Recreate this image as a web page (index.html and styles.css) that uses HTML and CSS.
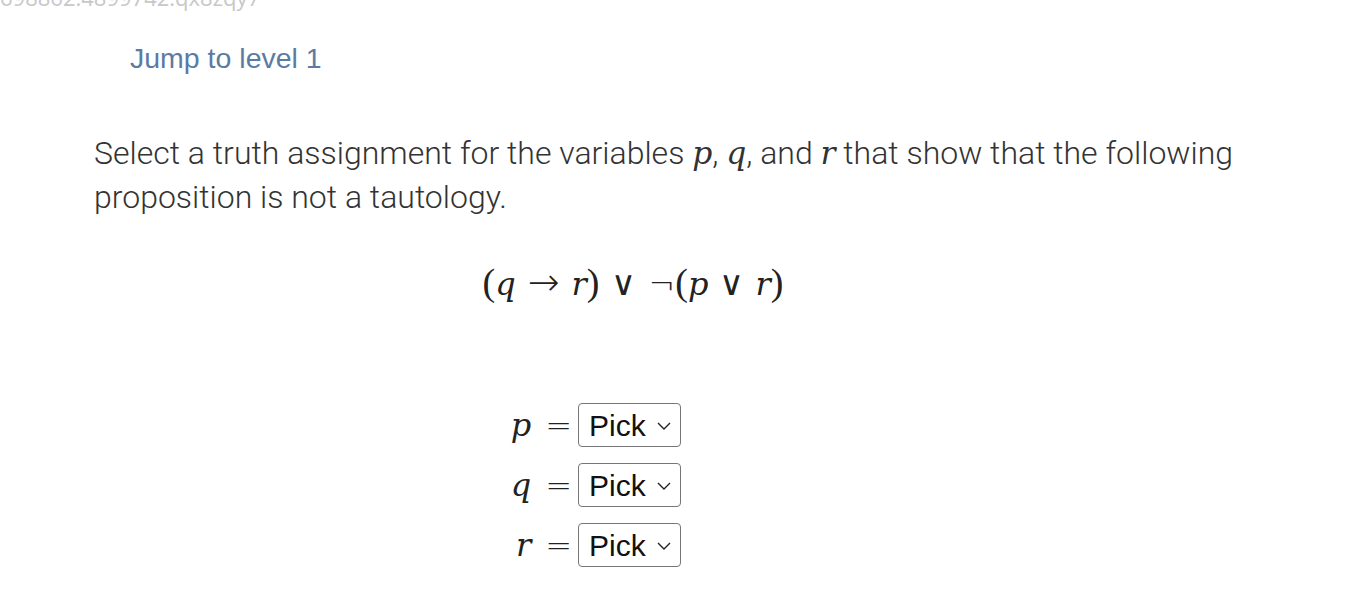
FILE: index.html
```html
<!DOCTYPE html>
<html>
<head>
<meta charset="utf-8">
<link rel="stylesheet" href="styles.css">
</head>
<body>
<div class="hash">698862.4899742.qx8zqy7</div>
<a class="jump" href="#">Jump to level 1</a>
<div class="content">
  <p class="prompt">Select a truth assignment for the variables <span class="mi">p</span>, <span class="mi">q</span>, and <span class="mi">r</span> that show that the following proposition is not a tautology.</p>
  <div class="equation">
    <span class="mo">(</span><span class="mi">q</span><span class="rel">→</span><span class="mi">r</span><span class="mo">)</span><span class="bin">∨</span><span class="op">¬</span><span class="mo">(</span><span class="mi">p</span><span class="bin">∨</span><span class="mi">r</span><span class="mo">)</span>
  </div>
  <div class="assignments">
    <div class="row">
      <span class="var"><span class="mi">p</span><span class="eq">=</span></span>
      <span class="pick"><select><option>Pick</option><option>T</option><option>F</option></select><svg class="chev" width="14" height="8" viewBox="0 0 14 8"><path d="M1 1 L7 7 L13 1" fill="none" stroke="#222" stroke-width="1.4"/></svg></span>
    </div>
    <div class="row">
      <span class="var"><span class="mi">q</span><span class="eq">=</span></span>
      <span class="pick"><select><option>Pick</option><option>T</option><option>F</option></select><svg class="chev" width="14" height="8" viewBox="0 0 14 8"><path d="M1 1 L7 7 L13 1" fill="none" stroke="#222" stroke-width="1.4"/></svg></span>
    </div>
    <div class="row">
      <span class="var"><span class="mi">r</span><span class="eq">=</span></span>
      <span class="pick"><select><option>Pick</option><option>T</option><option>F</option></select><svg class="chev" width="14" height="8" viewBox="0 0 14 8"><path d="M1 1 L7 7 L13 1" fill="none" stroke="#222" stroke-width="1.4"/></svg></span>
    </div>
  </div>
</div>
</body>
</html>
```
FILE: styles.css
```css
html, body {
  margin: 0;
  padding: 0;
  background: #fff;
}
body {
  font-family: "Liberation Sans", Arial, sans-serif;
  color: #333;
}
.hash {
  margin-top: -17px;
  font-family: "Open Sans", sans-serif;
  font-size: 22px;
  line-height: 28px;
  color: #c8c8c8;
  white-space: nowrap;
}
.jump {
  display: inline-block;
  margin-left: 130px;
  margin-top: 27px;
  font-size: 28.5px;
  line-height: 40px;
  color: #5b7ba3;
  text-decoration: none;
}
.content {
  margin-left: 94px;
  width: 1190px;
}
.prompt {
  margin: 53px 0 0 0;
  font-family: Roboto, sans-serif;
  font-weight: 300;
  font-size: 32px;
  line-height: 44px;
  color: #333;
}
.mi {
  font-family: "DejaVu Serif", "Liberation Serif", serif;
  font-style: italic;
  font-size: 0.98em;
}
.equation {
  width: 1078px;
  margin-top: 41px;
  display: flex;
  justify-content: center;
  align-items: baseline;
  font-family: "DejaVu Serif", "Liberation Serif", serif;
  font-size: 32px;
  line-height: 44px;
  color: #222;
}
.equation .mo {
  font-family: "Liberation Serif", serif;
  font-size: 38px;
}
.equation .mi { font-size: 1em; }
.equation .rel {
  font-family: "DejaVu Sans", sans-serif;
  font-size: 38px;
  font-weight: 200;
  margin: 0 12px;
}
.equation .bin {
  font-family: "Inter", "Noto Sans", "DejaVu Sans", sans-serif;
  font-size: 34px;
  font-weight: 300;
  margin: 0 11px;
}
.equation .op {
  font-family: "DejaVu Sans", sans-serif;
  font-weight: 200;
  margin-left: 2px;
}
.assignments {
  margin-top: 97px;
  margin-left: 408px;
  display: flex;
  flex-direction: column;
  gap: 16px;
}
.row {
  display: flex;
  align-items: center;
  height: 44px;
}
.var {
  width: 76px;
  display: flex;
  justify-content: flex-end;
  align-items: baseline;
  font-family: "DejaVu Serif", "Liberation Serif", serif;
  font-size: 32px;
  color: #222;
}
.var .mi { font-size: 1em; }
.var .eq {
  font-family: "DejaVu Sans", sans-serif;
  font-weight: 200;
  margin-left: 14px;
  margin-right: 6px;
}
.pick {
  position: relative;
  display: inline-block;
}
.pick select {
  appearance: none;
  -webkit-appearance: none;
  width: 103px;
  height: 44px;
  box-sizing: border-box;
  border: 1px solid #767676;
  border-radius: 4px;
  background: #fff;
  padding: 0 0 0 10px;
  font-family: "Liberation Sans", Arial, sans-serif;
  font-size: 30px;
  color: #111;
}
.chev {
  position: absolute;
  right: 10px;
  top: 19px;
  pointer-events: none;
}
```
